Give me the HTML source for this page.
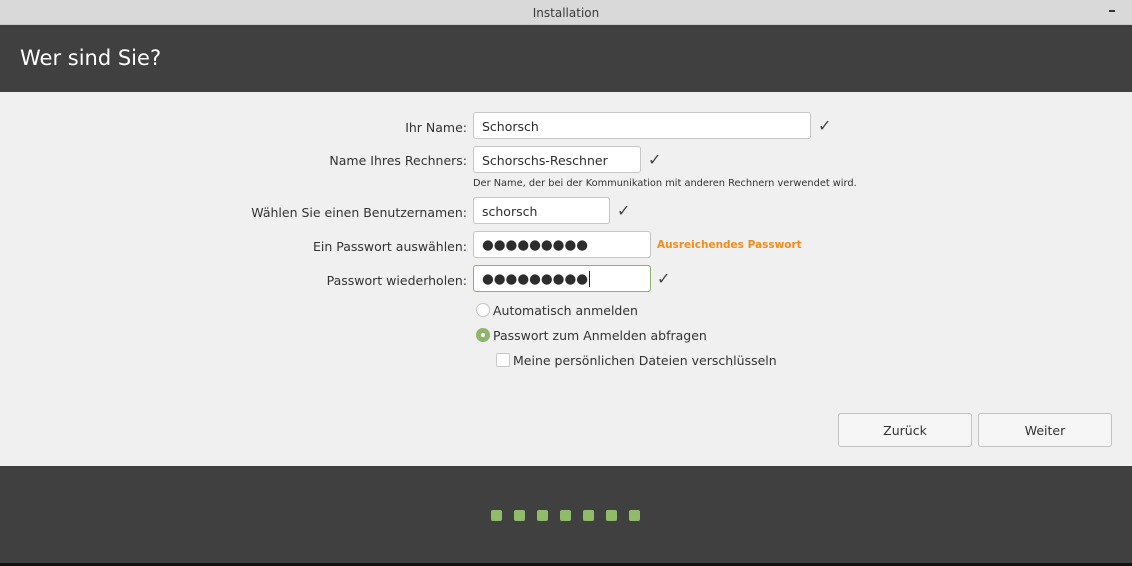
<!DOCTYPE html>
<html><head><meta charset="utf-8"><style>
*{margin:0;padding:0;box-sizing:border-box}
body{width:1132px;height:566px;overflow:hidden;background:#f0f0f0;font-family:"DejaVu Sans","Liberation Sans",sans-serif;font-size:12.5px;color:#333;position:relative}
.a{position:absolute}
.tb{left:0;top:0;width:1132px;height:25px;background:#d9d9d9;text-align:center;line-height:27px;font-size:12px;color:#3a3a3a;border-bottom:1px solid #c8c8c8}
.hd{left:0;top:25px;width:1132px;height:67px;background:#404040;color:#fff;font-size:21px;padding:21px 20px}
.ft{left:0;top:466px;width:1132px;height:97px;background:#404040}
.bl{left:0;top:563px;width:1132px;height:3px;background:#111}
.lbl{right:665px;text-align:right;white-space:nowrap}
.in{background:#fff;border:1px solid #c6c6c6;border-radius:3px;height:27px;padding-left:8px;line-height:27px;color:#2d2d2d}
.ck{font-size:16px;color:#444;font-weight:bold}
.dot{width:11px;height:11px;border-radius:2px;background:#8fbb6a;top:510px}
.btn{top:413px;width:134px;height:34px;border:1px solid #c2c2c2;border-radius:3px;background:#f6f6f6;text-align:center;line-height:34px;font-size:12.5px}
.pw{letter-spacing:0px;font-size:13.5px;line-height:26px}
</style></head><body>
<div class="a tb">Installation</div>
<div class="a" style="right:17px;top:10px;width:6px;height:2px;background:#333"></div>
<div class="a hd">Wer sind Sie?</div>

<div class="a lbl" style="top:120px">Ihr Name:</div>
<div class="a in" style="left:473px;top:112px;width:338px">Schorsch</div>
<div class="a ck" style="left:818px;top:116px">✓</div>

<div class="a lbl" style="top:153px">Name Ihres Rechners:</div>
<div class="a in" style="left:473px;top:146px;width:168px">Schorschs-Reschner</div>
<div class="a ck" style="left:648px;top:150px">✓</div>
<div class="a" style="left:473px;top:178px;font-size:9.8px;color:#333">Der Name, der bei der Kommunikation mit anderen Rechnern verwendet wird.</div>

<div class="a lbl" style="top:205px">Wählen Sie einen Benutzernamen:</div>
<div class="a in" style="left:473px;top:197px;width:137px">schorsch</div>
<div class="a ck" style="left:617px;top:201px">✓</div>

<div class="a lbl" style="top:239px">Ein Passwort auswählen:</div>
<div class="a in pw" style="left:473px;top:231px;width:178px">●●●●●●●●●</div>
<div class="a" style="left:657px;top:239px;font-size:10.5px;font-weight:bold;color:#f08c1a">Ausreichendes Passwort</div>

<div class="a lbl" style="top:273px">Passwort wiederholen:</div>
<div class="a in pw" style="left:473px;top:265px;width:178px;border-color:#8fb070">●●●●●●●●●<span style="border-left:1px solid #222;margin-left:1px"></span></div>
<div class="a ck" style="left:657px;top:269px">✓</div>

<div class="a" style="left:476px;top:303px;width:14px;height:14px;border-radius:50%;border:1px solid #c4c4c4;background:#fff"></div>
<div class="a" style="left:493px;top:303px">Automatisch anmelden</div>
<div class="a" style="left:476px;top:328px;width:14px;height:14px;border-radius:50%;background:#8fb56a"></div>
<div class="a" style="left:481px;top:333px;width:4px;height:4px;border-radius:50%;background:#fff"></div>
<div class="a" style="left:493px;top:328px">Passwort zum Anmelden abfragen</div>
<div class="a" style="left:496px;top:353px;width:14px;height:14px;border-radius:2px;border:1px solid #c8c8c8;background:#fff"></div>
<div class="a" style="left:513px;top:353px">Meine persönlichen Dateien verschlüsseln</div>

<div class="a btn" style="left:838px">Zurück</div>
<div class="a btn" style="left:978px">Weiter</div>

<div class="a ft"></div>
<div class="a bl"></div>
<div class="a dot" style="left:491px"></div>
<div class="a dot" style="left:514px"></div>
<div class="a dot" style="left:537px"></div>
<div class="a dot" style="left:560px"></div>
<div class="a dot" style="left:583px"></div>
<div class="a dot" style="left:606px"></div>
<div class="a dot" style="left:629px"></div>
</body></html>
